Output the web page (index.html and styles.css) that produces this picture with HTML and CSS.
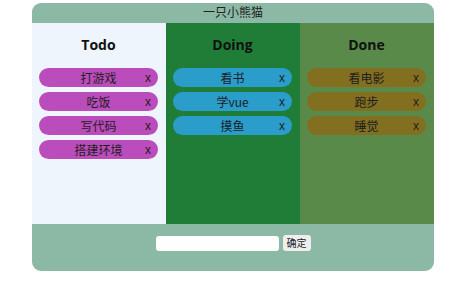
FILE: index.html
```html
<!DOCTYPE html>
<html lang="zh">
<head>
<meta charset="utf-8">
<link rel="stylesheet" href="styles.css">
</head>
<body>
<div class="board">
  <div class="header">一只小熊猫</div>
  <div class="columns">
    <div class="col todo">
      <div class="title">Todo</div>
      <ul class="list">
        <li class="item"><span class="txt">打游戏</span><span class="del">x</span></li>
        <li class="item"><span class="txt">吃饭</span><span class="del">x</span></li>
        <li class="item"><span class="txt">写代码</span><span class="del">x</span></li>
        <li class="item"><span class="txt">搭建环境</span><span class="del">x</span></li>
      </ul>
    </div>
    <div class="col doing">
      <div class="title">Doing</div>
      <ul class="list">
        <li class="item"><span class="txt">看书</span><span class="del">x</span></li>
        <li class="item"><span class="txt">学vue</span><span class="del">x</span></li>
        <li class="item"><span class="txt">摸鱼</span><span class="del">x</span></li>
      </ul>
    </div>
    <div class="col done">
      <div class="title">Done</div>
      <ul class="list">
        <li class="item"><span class="txt">看电影</span><span class="del">x</span></li>
        <li class="item"><span class="txt">跑步</span><span class="del">x</span></li>
        <li class="item"><span class="txt">睡觉</span><span class="del">x</span></li>
      </ul>
    </div>
  </div>
  <div class="footer">
    <input class="field" type="text">
    <button class="btn">确定</button>
  </div>
</div>
</body>
</html>
```
FILE: styles.css
```css
html, body {
  margin: 0;
  padding: 0;
  background: #ffffff;
}
body {
  padding: 3px 0 0 32px;
  font-family: "Noto Sans CJK SC", "Noto Sans", sans-serif;
  color: #1a1a1a;
}
.board {
  width: 402px;
  border-radius: 9px;
  overflow: hidden;
  background: #8cb9a6;
}
.header {
  height: 20px;
  line-height: 18px;
  text-align: center;
  font-size: 12px;
  color: #222;
}
.columns {
  display: flex;
  height: 201px;
}
.col {
  flex: 1;
  padding: 0 8px 0 7px;
}
.todo { background: #eef5fc; }
.doing { background: #207d38; }
.done { background: #5a8a4a; }
.title {
  height: 45px;
  line-height: 43px;
  text-align: center;
  font-family: "Open Sans", "Noto Sans", sans-serif;
  font-weight: 700;
  font-size: 14px;
  color: #111;
}
.list {
  list-style: none;
  margin: 0;
  padding: 0;
  display: flex;
  flex-direction: column;
  gap: 5px;
}
.item {
  height: 19px;
  border-radius: 10px;
  display: flex;
  align-items: center;
  position: relative;
  font-size: 12px;
  color: #1e1e1e;
}
.todo .item { background: #bb4cbb; }
.doing .item { background: #2b9dcb; }
.done .item { background: #836f20; }
.txt {
  flex: 1;
  text-align: center;
  line-height: 19px;
}
.del {
  position: absolute;
  right: 7px;
  top: 0;
  height: 19px;
  line-height: 21px;
  font-family: "Liberation Sans", sans-serif;
  font-size: 12px;
}
.footer {
  height: 47px;
  display: flex;
  justify-content: center;
  align-items: flex-start;
  gap: 4px;
  padding-top: 11px;
  box-sizing: border-box;
}
.field {
  width: 123px;
  height: 15px;
  margin-top: 1px;
  box-sizing: border-box;
  border: none;
  border-radius: 3px;
  background: #fdfefe;
  padding: 0;
}
.btn {
  width: 28px;
  height: 16px;
  padding: 0;
  border: none;
  border-radius: 3px;
  background: #eeeeee;
  font-family: "Noto Sans CJK SC", sans-serif;
  font-size: 10px;
  line-height: 16px;
  color: #222;
}
```
